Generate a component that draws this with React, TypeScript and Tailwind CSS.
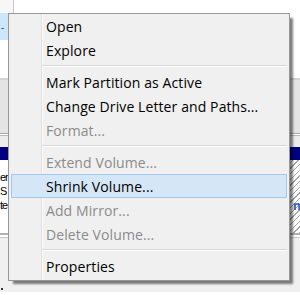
import React from 'react';

type Item = { label: string; disabled?: boolean; hover?: boolean } | 'sep';

const items: Item[] = [
  { label: 'Open' },
  { label: 'Explore' },
  'sep',
  { label: 'Mark Partition as Active' },
  { label: 'Change Drive Letter and Paths...' },
  { label: 'Format...', disabled: true },
  'sep',
  { label: 'Extend Volume...', disabled: true },
  { label: 'Shrink Volume...', hover: true },
  { label: 'Add Mirror...', disabled: true },
  { label: 'Delete Volume...', disabled: true },
  'sep',
  { label: 'Properties' },
];

function ContextMenu() {
  return (
    <div className="absolute left-[8px] top-[13px] w-[282px] h-[268px] bg-[#f0f0f0] border border-[#979797] shadow-[4px_4px_2px_-1px_rgba(0,0,0,0.5)] px-[2px] pt-0 pb-[2px]">
      {/* icon gutter */}
      <div className="absolute left-[32px] top-0 bottom-0 w-[2px] border-l border-[#e0e0e0] bg-white/70" />
      <div className="relative flex flex-col">
        {items.map((it, i) =>
          it === 'sep' ? (
            <div key={i} className="h-[8px] flex flex-col justify-center pl-[31px]">
              <div className="h-[1px] bg-[#d7d7d7]" />
              <div className="h-[1px] bg-white" />
            </div>
          ) : (
            <div
              key={i}
              className={
                'h-[24px] flex items-center pl-[34px] pt-[2px] border ' +
                (it.hover ? 'bg-[#d5e6f7] border-[#a3c9ee]' : 'border-transparent')
              }
            >
              <span className={'tracking-[0.1px] ' + (it.disabled ? 'text-[#8b8b8b]' : 'text-black')}>{it.label}</span>
            </div>
          )
        )}
      </div>
    </div>
  );
}

export default function App() {
  return (
    <div
      className="relative w-[300px] h-[295px] overflow-hidden bg-white text-[14px] leading-none"
      style={{ fontFamily: '"Segoe UI", "Open Sans", "Noto Sans", sans-serif' }}
    >
      {/* volume list */}
      <div className="h-[78px] flex">
        <div className="w-[14px] flex flex-col border-r border-[#c8c8c8]">
          <div className="h-[13px] bg-[#f7f7f7]" />
          <div className="h-[27px] bg-[#cce6fb] flex items-center text-[10px] text-[#333] pl-[1px]">-</div>
          <div className="flex-1 bg-white" />
        </div>
        <div className="flex-1 bg-white" />
      </div>
      <div className="h-[2px] bg-[#d4d4d4]" />
      {/* graphical view */}
      <div className="h-[53px] bg-[#e4e4e4]" />
      <div className="h-[1px] bg-[#a8a8a8]" />
      <div className="h-[1px] bg-[#ffffff]" />
      <div className="h-[1px] bg-[#b8b8b8]" />
      <div className="h-[11px] bg-[#ececec]" />
      <div className="h-[13px] bg-[#000080]" />
      <div className="h-[73px] flex">
        <div className="w-[8px] bg-white text-[11px] leading-[14px] tracking-[-1px] text-black flex flex-col pt-[10px] font-['Liberation_Sans',sans-serif]">
          <span>er</span>
          <span>S</span>
          <span>te</span>
        </div>
        <div className="flex-1" />
        <div className="w-[12px] bg-[repeating-linear-gradient(135deg,#ffffff_0px,#ffffff_3px,#a8a8a8_3px,#a8a8a8_4px)] flex items-start pt-[40px] pl-[5px]">
          <span className="text-[12px] font-bold text-[#3060c0]">n</span>
        </div>
      </div>
      <div className="h-[2px] bg-[#b0b0b0]" />
      <div className="h-[2px] bg-white" />
      <div className="h-[1px] bg-[#c8c8c8]" />
      <div className="h-[54px] bg-[#f0f0f0] relative">
        <div className="absolute left-[1px] top-[50px] w-[2px] h-[2px] bg-[#333]" />
      </div>
      <ContextMenu />
    </div>
  );
}
